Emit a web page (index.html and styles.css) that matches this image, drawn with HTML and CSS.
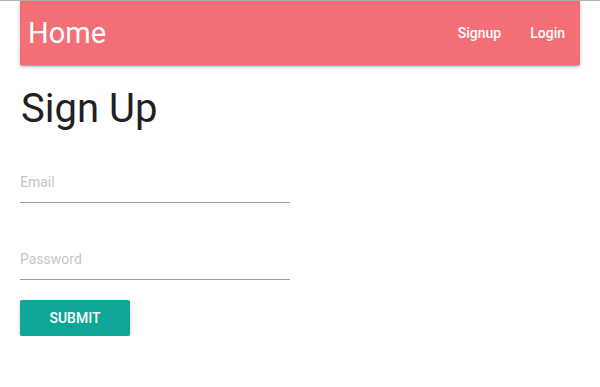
FILE: index.html
```html
<!DOCTYPE html>
<html>
<head>
<meta charset="utf-8">
<link rel="stylesheet" href="styles.css">
</head>
<body>
<div class="topline"></div>
<div class="container">
  <nav class="nav">
    <span class="brand">Home</span>
    <ul class="links">
      <li>Signup</li>
      <li>Login</li>
    </ul>
  </nav>
  <h1 class="title">Sign Up</h1>
  <form class="form">
    <div class="field"><input type="email" placeholder="Email"></div>
    <div class="field"><input type="password" placeholder="Password"></div>
    <button type="button" class="btn">SUBMIT</button>
  </form>
</div>
</body>
</html>
```
FILE: styles.css
```css
* { box-sizing: border-box; }
body {
  margin: 0;
  font-family: Roboto, "Liberation Sans", sans-serif;
  background: #fff;
  color: #222;
}
.topline { height: 1px; background: #b3b3b3; }
.container { width: 560px; margin: 0 20px; }
.nav {
  height: 64px;
  background: #f36f76;
  display: flex;
  align-items: center;
  justify-content: space-between;
  padding: 0 0 0 8px;
  box-shadow: 0 2px 2px 0 rgba(0,0,0,0.14), 0 1px 5px 0 rgba(0,0,0,0.12), 0 3px 1px -2px rgba(0,0,0,0.2);
  color: #fff;
}
.brand { font-size: 29px; line-height: 64px; }
.links { list-style: none; margin: 0; padding: 0; display: flex; }
.links li { font-size: 14px; font-weight: 500; padding: 0 15px 0 14px; line-height: 64px; }
.links li:last-child { padding-right: 15px; }
.title {
  font-size: 40px;
  font-weight: 400;
  margin: 21px 0 0 1px;
  line-height: 46px;
  color: #212121;
}
.form { display: flex; flex-direction: column; align-items: flex-start; margin-top: 30px; }
.field { width: 270px; margin-bottom: 36px; }
.field:last-of-type { margin-bottom: 20px; }
.field input {
  width: 100%;
  height: 41px;
  border: none;
  border-bottom: 1px solid #9e9e9e;
  outline: none;
  font-family: Roboto, "Liberation Sans", sans-serif;
  font-size: 14px;
  padding: 0;
  background: transparent;
}
.field input::placeholder { color: #c5c5c5; }
.btn {
  width: 110px;
  height: 36px;
  border: none;
  border-radius: 2px;
  background: #0fa69a;
  color: #fff;
  font-family: Roboto, "Liberation Sans", sans-serif;
  font-size: 14px;
  font-weight: 500;
  box-shadow: 0 2px 2px 0 rgba(0,0,0,0.14), 0 1px 5px 0 rgba(0,0,0,0.12), 0 3px 1px -2px rgba(0,0,0,0.2);
}
```
